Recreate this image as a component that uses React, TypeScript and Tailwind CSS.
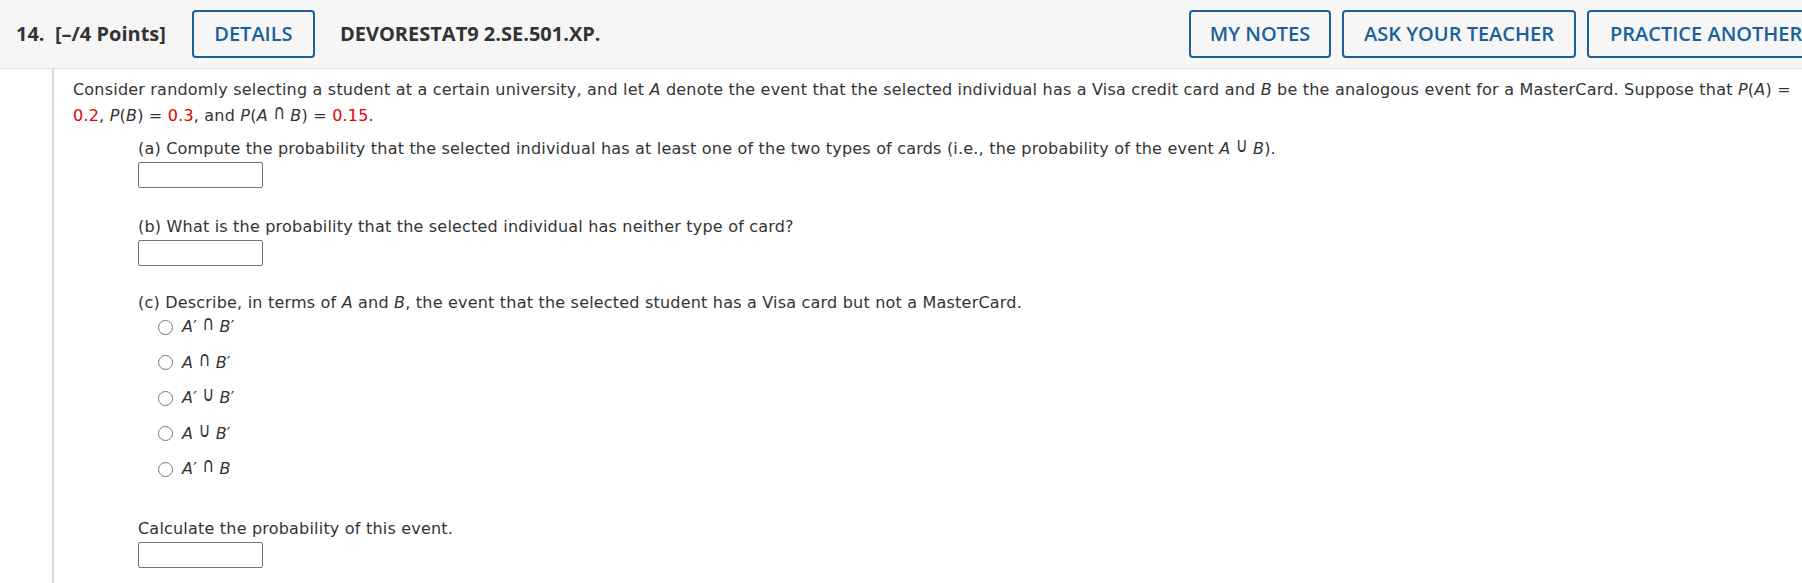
import type { ReactNode } from 'react';

const body = { fontFamily: '"DejaVu Sans", Verdana, sans-serif' };
const head = { fontFamily: '"Open Sans", "Noto Sans", sans-serif' };

function I({ children }: { children: ReactNode }) {
  return <i>{children}</i>;
}

function R({ children }: { children: ReactNode }) {
  return <span className="text-[#e60000]">{children}</span>;
}

// set symbols are drawn taller in the reference, roughly cap height
function Op({ children }: { children: ReactNode }) {
  return <span className="inline-block origin-bottom scale-y-[1.3]">{children}</span>;
}

function HeadButton({ label, className = '' }: { label: string; className?: string }) {
  return (
    <button
      className={`h-[48px] shrink-0 rounded-[4px] border-2 border-[#1b609a] bg-white/0 text-[20px] font-semibold text-[#1b609a] whitespace-nowrap overflow-hidden ${className}`}
    >
      {label}
    </button>
  );
}

function AnswerBox() {
  return <div className="h-[26px] w-[125px] rounded-[2px] border border-[#767676] bg-white" />;
}

const choices: ReactNode[] = [
  <><I>A</I>′ <Op>∩</Op> <I>B</I>′</>,
  <><I>A</I> <Op>∩</Op> <I>B</I>′</>,
  <><I>A</I>′ <Op>∪</Op> <I>B</I>′</>,
  <><I>A</I> <Op>∪</Op> <I>B</I>′</>,
  <><I>A</I>′ <Op>∩</Op> <I>B</I></>,
];

export default function App() {
  return (
    <div className="w-[1802px] h-[583px] overflow-hidden bg-white text-[#333]">
      {/* header bar */}
      <div
        className="flex h-[69px] items-center overflow-hidden border-b border-[#dedede] bg-[#f6f6f6] pl-[16px] whitespace-nowrap"
        style={head}
      >
        <span className="text-[20px] font-bold text-[#333]">14.&nbsp;&nbsp;[–/4 Points]</span>
        <HeadButton label="DETAILS" className="ml-[26px] w-[123px]" />
        <span className="ml-[25px] text-[20px] font-bold text-[#333]">DEVORESTAT9 2.SE.501.XP.</span>
        <div className="ml-auto flex gap-[11px] -mr-[30px]">
          <HeadButton label="MY NOTES" className="w-[142px]" />
          <HeadButton label="ASK YOUR TEACHER" className="w-[234px]" />
          <HeadButton label="PRACTICE ANOTHER" className="w-[245px] text-left pl-[21px]" />
        </div>
      </div>

      {/* question body */}
      <div
        className="ml-[52px] h-full border-l-2 border-[#dadada] pl-[19px] pt-[8px] text-[16px] tracking-[0.2px] leading-[26px]"
        style={body}
      >
        <p>
          Consider randomly selecting a student at a certain university, and let <I>A</I> denote the event that the
          selected individual has a Visa credit card and <I>B</I> be the analogous event for a MasterCard. Suppose that{' '}
          <I>P</I>(<I>A</I>) = <R>0.2</R>, <I>P</I>(<I>B</I>) = <R>0.3</R>, and <I>P</I>(<I>A</I> <Op>∩</Op> <I>B</I>) ={' '}
          <R>0.15</R>.
        </p>

        <div className="ml-[65px] mt-[7px]">
          <p>
            (a) Compute the probability that the selected individual has at least one of the two types of cards (i.e.,
            the probability of the event <I>A</I> <Op>∪</Op> <I>B</I>).
          </p>
          <AnswerBox />

          <p className="mt-[26px]">(b) What is the probability that the selected individual has neither type of card?</p>
          <AnswerBox />

          <p className="mt-[24px]">
            (c) Describe, in terms of <I>A</I> and <I>B</I>, the event that the selected student has a Visa card but not a
            MasterCard.
          </p>
          <div className="-mt-[2px] ml-[20px] flex flex-col gap-[9.5px]">
            {choices.map((c, i) => (
              <label key={i} className="flex h-[26px] items-center gap-[9px]">
                <span className="h-[15px] w-[15px] rounded-full border border-[#777] bg-white" />
                <span>{c}</span>
              </label>
            ))}
          </div>

          <p className="mt-[34px]">Calculate the probability of this event.</p>
          <AnswerBox />
        </div>
      </div>
    </div>
  );
}
